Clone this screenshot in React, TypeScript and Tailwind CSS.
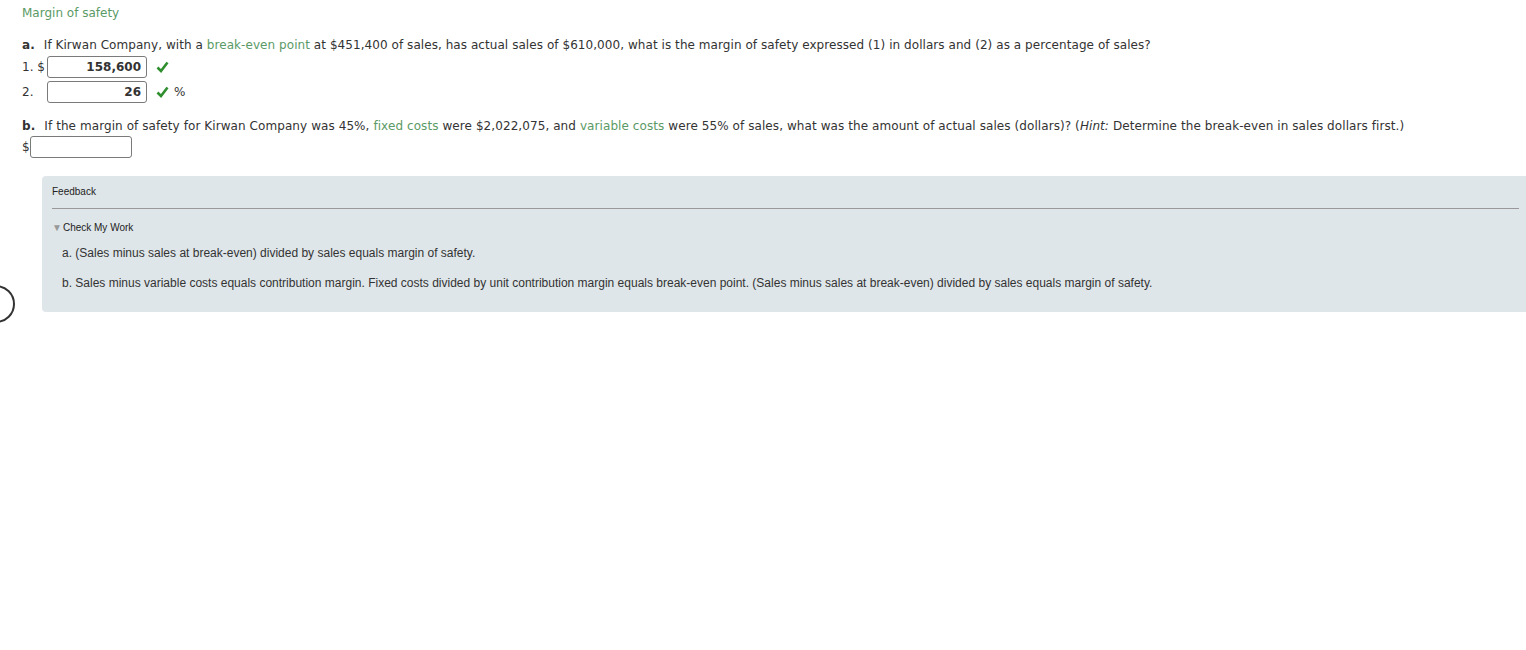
const verdana = { fontFamily: '"DejaVu Sans", Verdana, sans-serif' }

function Check() {
  return (
    <svg width="13" height="12" viewBox="0 0 13 12" className="inline-block">
      <path d="M1.5 6.5 L5 10 L11.5 1.5" fill="none" stroke="#2f8f2f" strokeWidth="2.6" />
    </svg>
  )
}

function Answer({ value, width = 'w-[100px]' }: { value: string; width?: string }) {
  return (
    <div
      className={`${width} h-[22px] rounded-[3px] border border-[#7a7a7a] bg-white px-[5px] text-right text-[12px] font-bold leading-[20px] text-[#333]`}
    >
      {value}
    </div>
  )
}

export default function App() {
  return (
    <div className="relative min-h-[650px] w-[1526px] overflow-hidden bg-white text-[#333]">
      <div className="pl-[22px] pt-[6px] text-[12px] leading-[15px]" style={verdana}>
        <div className="text-[#5b9a66]">Margin of safety</div>

        <div className="mt-[17px] flex tracking-[0.06px]">
          <span className="mr-[9px] font-bold">a.</span>
          <span>
            If Kirwan Company, with a <span className="text-[#5b9a66]">break-even point</span> at $451,400 of sales,
            has actual sales of $610,000, what is the margin of safety expressed (1) in dollars and (2) as a percentage
            of sales?
          </span>
        </div>

        <div className="mt-[3px] flex items-center">
          <span className="w-[25px]">1. $</span>
          <Answer value="158,600" />
          <span className="ml-[9px]">
            <Check />
          </span>
        </div>
        <div className="mt-[3px] flex items-center">
          <span className="w-[25px]">2.</span>
          <Answer value="26" />
          <span className="ml-[9px] flex items-center gap-[5px]">
            <Check />
            <span>%</span>
          </span>
        </div>

        <div className="mt-[16px] flex tracking-[0.08px]">
          <span className="mr-[9px] font-bold">b.</span>
          <span>
            If the margin of safety for Kirwan Company was 45%, <span className="text-[#5b9a66]">fixed costs</span> were
            $2,022,075, and <span className="text-[#5b9a66]">variable costs</span> were 55% of sales, what was the
            amount of actual sales (dollars)? (<i>Hint:</i> Determine the break-even in sales dollars first.)
          </span>
        </div>
        <div className="mt-[2px] flex items-center">
          <span className="w-[8px]">$</span>
          <Answer value="" width="w-[102px]" />
        </div>
      </div>

      <div
        className="ml-[42px] mt-[18px] rounded-l-[4px] bg-[#dfe6e9] pb-[22px] pl-[10px] pr-[7px] pt-[10px] text-[#222]"
        style={{ fontFamily: '"Liberation Sans", Arial, sans-serif' }}
      >
        <div className="border-b border-[#999] pb-[10px] text-[10px] leading-[12px]">Feedback</div>
        <div className="mt-[13px] flex items-center text-[10px] leading-[12px]">
          <span className="mr-[1px] text-[10px] leading-[10px] text-[#999]">▼</span>
          <span>Check My Work</span>
        </div>
        <div className="pl-[10px] text-[12px] leading-[14px] text-[#333]">
          <p className="mt-[12px]">a. (Sales minus sales at break-even) divided by sales equals margin of safety.</p>
          <p className="mt-[16px]">
            b. Sales minus variable costs equals contribution margin. Fixed costs divided by unit contribution margin
            equals break-even point. (Sales minus sales at break-even) divided by sales equals margin of safety.
          </p>
        </div>
      </div>

      <div className="absolute left-[-23px] top-[285px] h-[38px] w-[38px] rounded-full border-2 border-[#333]" />
    </div>
  )
}
